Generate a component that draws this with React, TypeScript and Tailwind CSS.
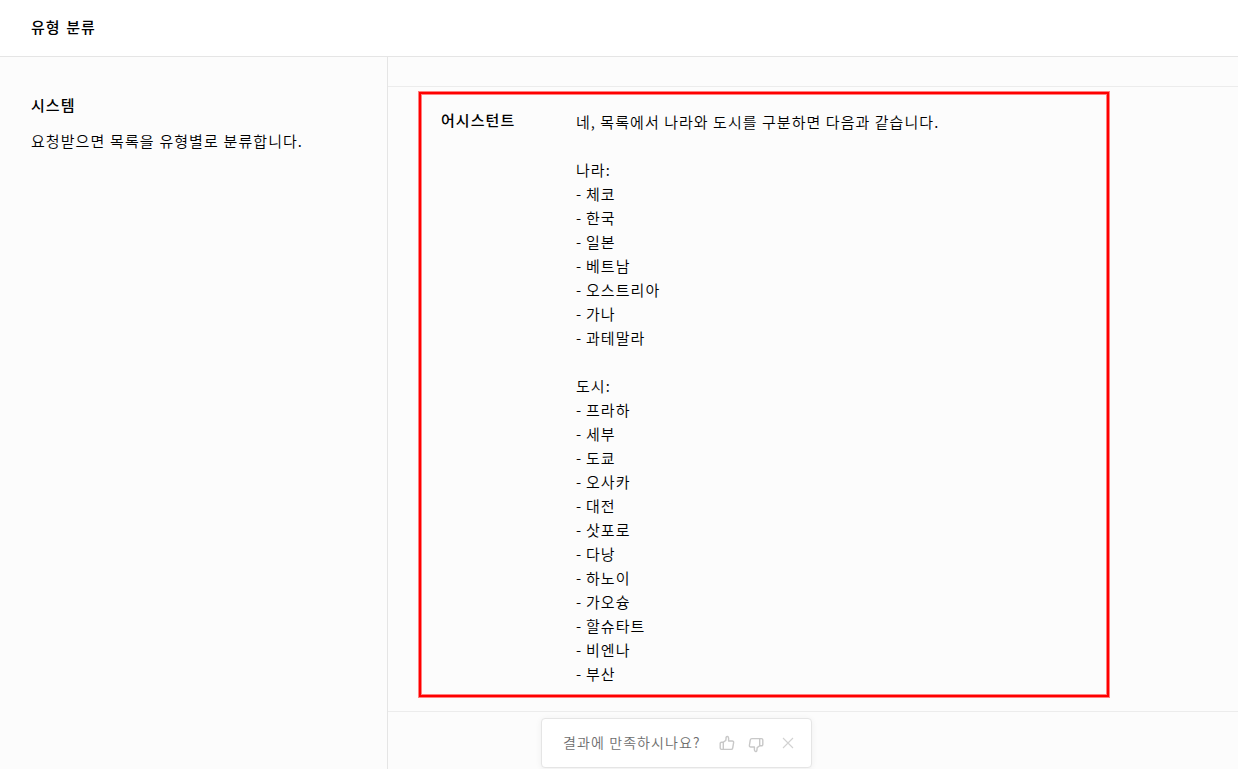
import React from "react";

const countries = ["체코", "한국", "일본", "베트남", "오스트리아", "가나", "과테말라"];

const cities = [
  "프라하",
  "세부",
  "도쿄",
  "오사카",
  "대전",
  "삿포로",
  "다낭",
  "하노이",
  "가오슝",
  "할슈타트",
  "비엔나",
  "부산"
];

interface GroupProps {
  title: string;
  items: string[];
}

const Group: React.FC<GroupProps> = ({ title, items }) => (
  <div className="mt-6">
    <p>{title}:</p>
    <ul className="[word-spacing:-0.6px]">
      {items.map((item) => (
        <li key={item}>- {item}</li>
      ))}
    </ul>
  </div>
);

const ThumbIcon: React.FC<{ className?: string }> = ({ className }) => (
  <svg
    viewBox="0 0 16 16"
    className={className}
    fill="none"
    stroke="currentColor"
    strokeWidth="1.4"
    strokeLinejoin="round"
    strokeLinecap="round"
  >
    <path d="M4.3 7.2H2.6C1.7 7.2 1.2 7.8 1.2 8.6V13C1.2 13.9 1.8 14.4 2.6 14.4H4.3Z" />
    <path d="M4.3 7.2L6.8 5.4L7.2 2.2C7.3 1.1 9.6 1.2 9.6 3.2V6H13.2C14.2 6 14.8 6.7 14.6 7.7L13.7 13.1C13.5 14 13 14.4 12.2 14.4H4.3" />
  </svg>
);

const FeedbackCard: React.FC = () => (
  <div className="flex h-[50px] w-[271px] items-center rounded border border-[#e5e5e5] bg-white pl-[21px] text-[#6e6e6e] shadow-[0_1px_6px_rgba(0,0,0,0.06)]">
    <span className="-mt-0.5 w-[156px] whitespace-nowrap text-sm tracking-[1.1px]">결과에 만족하시나요?</span>
    <button>
      <ThumbIcon className="size-4 text-[#c8c8c8]" />
    </button>
    <button className="ml-[13px] mt-[3px]">
      <ThumbIcon className="size-4 rotate-180 text-[#c8c8c8]" />
    </button>
    <button className="ml-[18px]">
      <svg viewBox="0 0 12 12" className="size-3 text-[#d2d2d2]" fill="none" stroke="currentColor" strokeWidth="1.1">
        <path d="M1 1L11 11M11 1L1 11" />
      </svg>
    </button>
  </div>
);

const App: React.FC = () => (
  <div className="flex h-screen flex-col overflow-hidden bg-[#fcfcfc] font-['Noto_Sans_CJK_KR',sans-serif] text-[15px] leading-6 font-[350] tracking-[1.05px] text-black">
    <header className="h-[57px] shrink-0 border-b border-[#e5e5e5] bg-white pl-[31px] pt-[15px]">
      <h1 className="font-medium [word-spacing:1px]">유형 분류</h1>
    </header>
    <div className="flex min-h-0 flex-1">
      <aside className="w-[388px] shrink-0 border-r border-[#e5e5e5] pl-[31px] pt-9">
        <h2 className="font-medium">시스템</h2>
        <p className="mt-3 [word-spacing:0.4px]">요청받으면 목록을 유형별로 분류합니다.</p>
      </aside>
      <main className="flex min-w-0 flex-1 flex-col">
        <div className="h-[30px] shrink-0 border-b border-[#ececec]" />
        <section className="h-[625px] shrink-0 border-b border-[#ececec] pl-[31px] pt-[5px]">
          {/* highlighted reply, 2px line with a softer pixel on each side */}
          <div className="flex h-[605px] w-[690px] border-2 border-[#ff0000] pl-5 pt-[15px] shadow-[0_0_0_1px_#ff8080,inset_0_0_0_1px_#ff8080]">
            <h3 className="-mt-px w-[135px] shrink-0 font-medium">어시스턴트</h3>
            <div className="pt-px">
              <p>네, 목록에서 나라와 도시를 구분하면 다음과 같습니다.</p>
              <Group title="나라" items={countries} />
              <Group title="도시" items={cities} />
            </div>
          </div>
        </section>
        <div className="pl-[153px] pt-1.5">
          <FeedbackCard />
        </div>
      </main>
    </div>
  </div>
);

export default App;
